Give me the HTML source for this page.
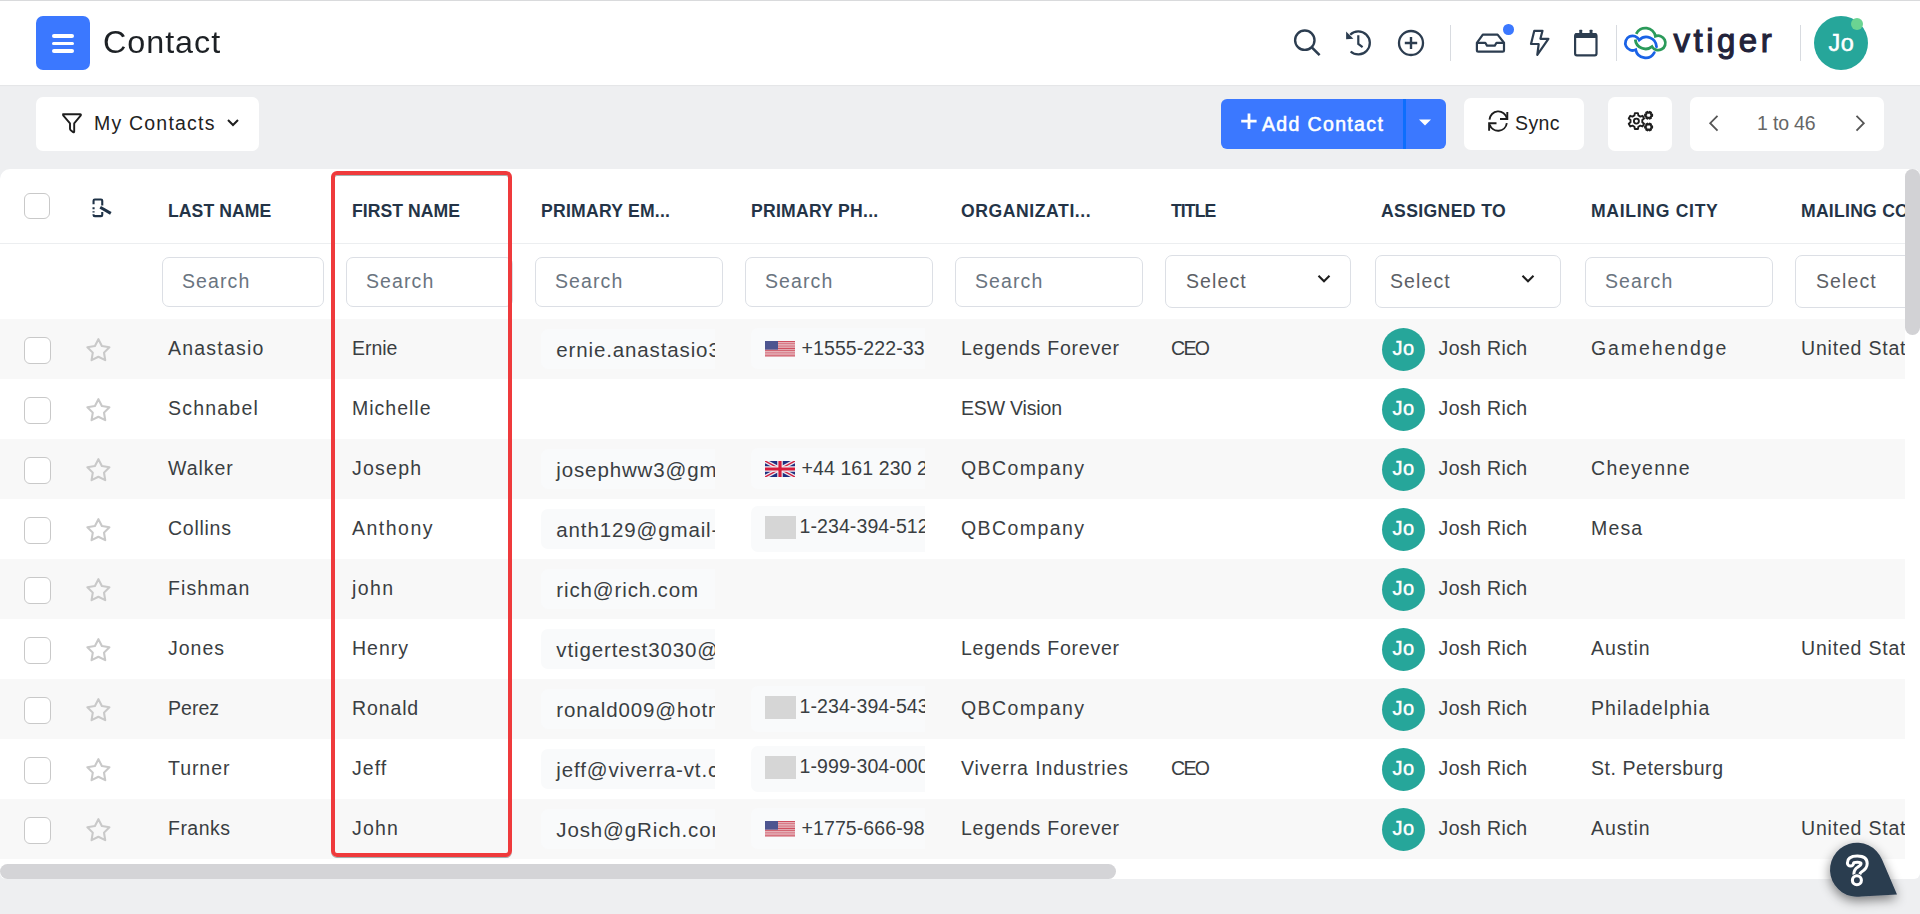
<!DOCTYPE html>
<html><head><meta charset="utf-8"><title>Contact</title><style>
*{box-sizing:border-box}
html,body{margin:0;padding:0}
body{width:1920px;height:914px;overflow:hidden;position:relative;background:#eeeff1;font-family:"Liberation Sans", sans-serif}
.t{position:absolute;white-space:nowrap}
.ic{position:absolute;display:block}
#hdr{position:absolute;left:0;top:0;width:1920px;height:85px;background:#fff;border-top:1px solid #d9dadc;box-shadow:0 1px 1px rgba(0,0,0,0.035)}
#ham{position:absolute;left:36px;top:16px;width:54px;height:54px;border-radius:7px;background:#3b78ff}
#ham i{position:absolute;left:16px;width:22px;height:3.6px;border-radius:2px;background:#fff}
.vsep{position:absolute;top:25px;width:1px;height:36px;background:#d8dbe0}
#av{position:absolute;left:1814px;top:16px;width:54px;height:54px;border-radius:50%;background:#26a69a}
#av span{position:absolute;left:0;width:54px;top:15.6px;text-align:center;color:#fff;font-size:23.5px;line-height:23.5px;letter-spacing:0.6px;-webkit-text-stroke:0.5px #fff;padding-left:1px}
#avdot{position:absolute;left:1851px;top:18px;width:12px;height:12px;border-radius:50%;background:#6bd492}
.btn{position:absolute;background:#fff;border-radius:7px}
#addbtn{position:absolute;left:1221px;top:99px;width:225px;height:50px;border-radius:6px;background:#3b78ff}
#adddiv{position:absolute;left:1403px;top:99px;width:3px;height:50px;background:#0d6efd}
#card{position:absolute;left:0;top:169px;width:1920px;height:710px;background:#fff;border-radius:10px 6px 6px 6px}
#clip{position:absolute;left:0;top:169px;width:1905px;height:690px;overflow:hidden;border-top-left-radius:10px}
.cb{position:absolute;background:#fff;border:1px solid #c9c9c9;border-radius:6px}
.inp{position:absolute;background:#fff;border:1px solid #dcdfe5;border-radius:7px}
.row{position:absolute;left:0;width:1905px;height:60px}
.ebox{position:absolute;background:#f9fafb;border-radius:7px 0 0 7px;overflow:hidden}
.av2{position:absolute;width:43px;height:43px;border-radius:50%;background:#26a69a}
.av2 span{position:absolute;left:0;width:43px;top:10.1px;text-align:center;color:#fff;font-size:20px;line-height:20px;letter-spacing:0.4px;-webkit-text-stroke:0.45px #fff}
#red{position:absolute;left:331px;top:2px;width:181px;height:686px;border:4px solid #ef3a3c;border-radius:6px;box-shadow:inset 0 1px 0 rgba(0,40,40,0.35), 0 1px 0 rgba(0,40,40,0.35)}
#hs{position:absolute;left:0;top:864px;width:1116px;height:15px;border-radius:8px;background:#d4d4d7}
#vs{position:absolute;left:1905px;top:169px;width:15px;height:166px;border-radius:8px;background:#d2d2d5}
</style></head>
<body>
<div id="hdr"></div>
<div id="ham"><i style="top:18px"></i><i style="top:25.5px"></i><i style="top:33px"></i></div>
<div class="t" style="left:103px;top:26.98px;font-size:30.5px;line-height:30.5px;color:#1d2125;font-weight:normal;letter-spacing:0.9px;transform:scaleX(1.06);transform-origin:0 0;">Contact</div>
<svg class="ic" style="left:1290px;top:26px" width="34" height="34" viewBox="0 0 34 34"><circle cx="14.8" cy="14.2" r="9.7" fill="none" stroke="#2c3d50" stroke-width="2.4"/><line x1="21.8" y1="21.3" x2="29.6" y2="29.2" stroke="#2c3d50" stroke-width="2.6" stroke-linecap="butt"/></svg>
<svg class="ic" style="left:1340px;top:26px" width="36" height="34" viewBox="0 0 36 34"><path d="M10.2 8.8 A11.5 11.5 0 1 1 10.65 25.5" fill="none" stroke="#2c3d50" stroke-width="2.3"/><path d="M6.1 5.6 L6.1 13.3 L13.4 12.8 Z" fill="#2c3d50"/><path d="M18.3 9.3 V17.9 L22.6 21.1" fill="none" stroke="#2c3d50" stroke-width="2.2"/></svg>
<svg class="ic" style="left:1394px;top:26px" width="34" height="34" viewBox="0 0 34 34"><circle cx="17" cy="17" r="12" fill="none" stroke="#2c3d50" stroke-width="2.3"/><path d="M17 11 V23 M10.8 17 H23.2" stroke="#2c3d50" stroke-width="2.4"/></svg>
<div class="vsep" style="left:1450px"></div>
<svg class="ic" style="left:1472px;top:26px" width="38" height="32" viewBox="0 0 38 32"><path d="M4.9 16.8 L10.8 8.6 H25.6 L32 16.8 V24.3 Q32 25.7 30.6 25.7 H6.3 Q4.9 25.7 4.9 24.3 Z" fill="none" stroke="#2c3d50" stroke-width="2.2" stroke-linejoin="round"/><path d="M4.9 16.8 H13.3 L15 19.6 H22.8 L24.5 16.8 H32" fill="none" stroke="#2c3d50" stroke-width="2.2" stroke-linejoin="round"/></svg>
<div style="position:absolute;left:1503px;top:24px;width:10.5px;height:10.5px;border-radius:50%;background:#3b78ff"></div>
<svg class="ic" style="left:1526px;top:26px" width="28" height="34" viewBox="0 0 28 34"><path d="M8.3 4.8 H16.5 L14.4 12.8 H22.4 L11.3 28.8 L12.7 18 H5 Z" fill="none" stroke="#2c3d50" stroke-width="2.2" stroke-linejoin="round"/></svg>
<svg class="ic" style="left:1570px;top:26px" width="32" height="34" viewBox="0 0 32 34"><rect x="5.1" y="8.2" width="21.4" height="21.1" rx="1.8" fill="none" stroke="#2c3d50" stroke-width="2.2"/><rect x="5.1" y="7.1" width="21.4" height="5" rx="1" fill="#2c3d50"/><rect x="9.3" y="3.7" width="2.9" height="4" rx="0.5" fill="#2c3d50"/><rect x="19.6" y="3.7" width="2.9" height="4" rx="0.5" fill="#2c3d50"/></svg>
<div class="vsep" style="left:1616px"></div>
<svg class="ic" style="left:1618px;top:20px" width="60" height="45" viewBox="0 0 60 45"><path d="M18.2 13.8 A10.2 10.2 0 0 1 37.4 16.3 A7.2 7.2 0 1 1 34 26.6 A10.3 10.3 0 0 1 17.3 19.5" fill="none" stroke="#2b9a5a" stroke-width="2.8"/><path d="M38.5 26.8 A10.2 10.2 0 0 0 21.2 19.9 A7.3 7.3 0 1 0 17.7 29.8 A10 10 0 0 0 36.3 32.6" fill="none" stroke="#1a62e6" stroke-width="2.8" stroke-linecap="round"/></svg>
<div class="t" style="left:1673.5px;top:23.57px;font-size:33px;line-height:33px;color:#22223a;font-weight:normal;letter-spacing:3.5px;-webkit-text-stroke:1.1px #22223a;">vtiger</div>
<div class="vsep" style="left:1800px"></div>
<div id="av"><span>Jo</span></div><div id="avdot"></div>
<div class="btn" style="left:36px;top:97px;width:223px;height:54px"></div>
<svg class="ic" style="left:58px;top:110px" width="28" height="26" viewBox="0 0 28 26"><path d="M5 4.2 H22 Q23.5 4.3 22.6 5.7 L16.2 13.3 V21.6 Q16.2 22.7 15.2 22.2 L12.8 20.3 Q12 19.6 12 18.7 V13.3 L5.4 5.7 Q4.5 4.3 6 4.2 Z" fill="none" stroke="#1e1e1e" stroke-width="1.9" stroke-linejoin="round"/></svg>
<div class="t" style="left:94px;top:113.79px;font-size:19.5px;line-height:19.5px;color:#222;font-weight:normal;letter-spacing:1.2050000000000012px;">My Contacts</div>
<svg class="ic" style="left:224px;top:114px" width="18" height="18" viewBox="0 0 18 18"><path d="M4 6 L9 11 L14 6" fill="none" stroke="#1e1e1e" stroke-width="2"/></svg>
<div id="addbtn"></div><div id="adddiv"></div>
<svg class="ic" style="left:1238px;top:110px" width="22" height="22" viewBox="0 0 22 22"><path d="M11 3.4 V19 M3.2 11.2 H18.6" stroke="#fff" stroke-width="2.8"/></svg>
<div class="t" style="left:1262px;top:114.79px;font-size:19.5px;line-height:19.5px;color:#fff;font-weight:normal;letter-spacing:1.35px;-webkit-text-stroke:0.55px #fff;">Add Contact</div>
<svg class="ic" style="left:1417px;top:117px" width="16" height="10" viewBox="0 0 16 10"><path d="M2 2.5 H14 L8 8.5 Z" fill="#fff"/></svg>
<div class="btn" style="left:1464px;top:98px;width:120px;height:52px"></div>
<svg class="ic" style="left:1484px;top:108px" width="28" height="28" viewBox="0 0 28 28"><path d="M5.5 11.6 A8.8 8.8 0 0 1 22.9 10.4" fill="none" stroke="#1e1e1e" stroke-width="1.9"/><path d="M22.8 15.1 A8.8 8.8 0 0 1 5.7 16.6" fill="none" stroke="#1e1e1e" stroke-width="1.9"/><path d="M23.3 4 V11 H16" fill="none" stroke="#1e1e1e" stroke-width="1.9"/><path d="M5.1 22.7 V15.3 H12.5" fill="none" stroke="#1e1e1e" stroke-width="1.9"/></svg>
<div class="t" style="left:1515px;top:113.79px;font-size:19.5px;line-height:19.5px;color:#222;font-weight:normal;letter-spacing:0.4166666666666667px;">Sync</div>
<div class="btn" style="left:1608px;top:97px;width:64px;height:54px"></div>
<svg class="ic" style="left:1624px;top:108px" width="34" height="28" viewBox="0 0 34 28"><path d="M10.45 7.43 L10.85 5.15 L13.95 5.15 L14.35 7.43 L16.34 8.57 L18.51 7.79 L20.06 10.46 L18.29 11.96 L18.29 14.24 L20.06 15.74 L18.51 18.41 L16.34 17.63 L14.35 18.77 L13.95 21.05 L10.85 21.05 L10.45 18.77 L8.46 17.63 L6.29 18.41 L4.74 15.74 L6.51 14.24 L6.51 11.96 L4.74 10.46 L6.29 7.79 L8.46 8.57 Z" fill="none" stroke="#1e1e1e" stroke-width="1.9" stroke-linejoin="round"/><circle cx="12.4" cy="13.1" r="2.5" fill="none" stroke="#1e1e1e" stroke-width="1.9"/><path d="M26.95 6.34 L28.21 6.37 L28.21 8.03 L26.95 8.06 L26.52 8.81 L27.12 9.91 L25.68 10.74 L25.03 9.66 L24.17 9.66 L23.52 10.74 L22.08 9.91 L22.68 8.81 L22.25 8.06 L20.99 8.03 L20.99 6.37 L22.25 6.34 L22.68 5.59 L22.08 4.49 L23.52 3.66 L24.17 4.74 L25.03 4.74 L25.68 3.66 L27.12 4.49 L26.52 5.59 Z" fill="none" stroke="#1e1e1e" stroke-width="1.8" stroke-linejoin="round"/><path d="M26.95 18.14 L28.21 18.17 L28.21 19.83 L26.95 19.86 L26.52 20.61 L27.12 21.71 L25.68 22.54 L25.03 21.46 L24.17 21.46 L23.52 22.54 L22.08 21.71 L22.68 20.61 L22.25 19.86 L20.99 19.83 L20.99 18.17 L22.25 18.14 L22.68 17.39 L22.08 16.29 L23.52 15.46 L24.17 16.54 L25.03 16.54 L25.68 15.46 L27.12 16.29 L26.52 17.39 Z" fill="none" stroke="#1e1e1e" stroke-width="1.8" stroke-linejoin="round"/></svg>
<div class="btn" style="left:1690px;top:97px;width:194px;height:54px"></div>
<svg class="ic" style="left:1704px;top:113px" width="20" height="20" viewBox="0 0 20 20"><path d="M13.5 2.8 L6.2 10.2 L13.5 17.6" fill="none" stroke="#555" stroke-width="1.8"/></svg>
<div class="t" style="left:1757px;top:113.79px;font-size:19.5px;line-height:19.5px;color:#666;font-weight:normal;letter-spacing:-0.17499999999999952px;">1 to 46</div>
<svg class="ic" style="left:1850px;top:113px" width="20" height="20" viewBox="0 0 20 20"><path d="M6.5 2.8 L13.8 10.2 L6.5 17.6" fill="none" stroke="#555" stroke-width="1.8"/></svg>
<div id="card"></div>
<div id="clip">
<div style="position:absolute;left:0;top:74px;width:1905px;height:1px;background:#eceef0"></div>
<div class="cb" style="left:24px;top:24px;width:26px;height:26px"></div>
<svg class="ic" style="left:88px;top:26px" width="26" height="24" viewBox="0 0 26 24"><path d="M5.55 9.3 V5.8 Q5.55 4.55 6.8 4.55 H13 Q14.25 4.55 14.25 5.8 V10.6" fill="none" stroke="#1f3247" stroke-width="2.1"/><path d="M14.25 17 V19.9 Q14.25 21.15 13 21.15 H6.8 Q5.55 21.15 5.55 19.9 V19.2" fill="none" stroke="#1f3247" stroke-width="2.1"/><path d="M5.55 12.2 V14.2 M5.55 16.2 V17.6" stroke="#1f3247" stroke-width="2.1"/><path d="M12.2 12.3 L22.8 18.4" stroke="#1f3247" stroke-width="3"/></svg>
<div class="t" style="left:168px;top:34.10px;font-size:17.6px;line-height:17.6px;color:#243447;font-weight:bold;letter-spacing:0.08124999999999893px;">LAST NAME</div>
<div class="t" style="left:352px;top:34.10px;font-size:17.6px;line-height:17.6px;color:#243447;font-weight:bold;letter-spacing:0.050000000000000315px;">FIRST NAME</div>
<div class="t" style="left:541px;top:34.10px;font-size:17.6px;line-height:17.6px;color:#243447;font-weight:bold;letter-spacing:0.23749999999999952px;">PRIMARY EM...</div>
<div class="t" style="left:751px;top:34.10px;font-size:17.6px;line-height:17.6px;color:#243447;font-weight:bold;letter-spacing:0.25833333333333286px;">PRIMARY PH...</div>
<div class="t" style="left:961px;top:34.10px;font-size:17.6px;line-height:17.6px;color:#243447;font-weight:bold;letter-spacing:0.5708333333333329px;">ORGANIZATI...</div>
<div class="t" style="left:1171px;top:34.10px;font-size:17.6px;line-height:17.6px;color:#243447;font-weight:bold;letter-spacing:-0.9000000000000004px;">TITLE</div>
<div class="t" style="left:1381px;top:34.10px;font-size:17.6px;line-height:17.6px;color:#243447;font-weight:bold;letter-spacing:0.375px;">ASSIGNED TO</div>
<div class="t" style="left:1591px;top:34.10px;font-size:17.6px;line-height:17.6px;color:#243447;font-weight:bold;letter-spacing:0.6909090909090917px;">MAILING CITY</div>
<div class="t" style="left:1801px;top:34.10px;font-size:17.6px;line-height:17.6px;color:#243447;font-weight:bold;letter-spacing:0.25px;">MAILING COUNTRY</div>
<div class="inp" style="left:162px;top:88px;width:162px;height:50px"></div><div class="t" style="left:182px;top:102.99px;font-size:19.5px;line-height:19.5px;color:#6a7480;font-weight:normal;letter-spacing:1.1px;">Search</div>
<div class="inp" style="left:346px;top:88px;width:167px;height:50px"></div><div class="t" style="left:366px;top:102.99px;font-size:19.5px;line-height:19.5px;color:#6a7480;font-weight:normal;letter-spacing:1.1px;">Search</div>
<div class="inp" style="left:535px;top:88px;width:188px;height:50px"></div><div class="t" style="left:555px;top:102.99px;font-size:19.5px;line-height:19.5px;color:#6a7480;font-weight:normal;letter-spacing:1.1px;">Search</div>
<div class="inp" style="left:745px;top:88px;width:188px;height:50px"></div><div class="t" style="left:765px;top:102.99px;font-size:19.5px;line-height:19.5px;color:#6a7480;font-weight:normal;letter-spacing:1.1px;">Search</div>
<div class="inp" style="left:955px;top:88px;width:188px;height:50px"></div><div class="t" style="left:975px;top:102.99px;font-size:19.5px;line-height:19.5px;color:#6a7480;font-weight:normal;letter-spacing:1.1px;">Search</div>
<div class="inp" style="left:1165px;top:86px;width:186px;height:53px"></div><div class="t" style="left:1186px;top:102.99px;font-size:19.5px;line-height:19.5px;color:#5c6066;font-weight:normal;letter-spacing:1.1px;">Select</div><svg class="ic" style="left:1315px;top:102px" width="18" height="16" viewBox="0 0 18 16"><path d="M3.5 4.8 L9 10.3 L14.5 4.8" fill="none" stroke="#1e1e1e" stroke-width="2.1"/></svg>
<div class="inp" style="left:1375px;top:86px;width:186px;height:53px"></div><div class="t" style="left:1390px;top:102.99px;font-size:19.5px;line-height:19.5px;color:#5c6066;font-weight:normal;letter-spacing:1.1px;">Select</div><svg class="ic" style="left:1519px;top:102px" width="18" height="16" viewBox="0 0 18 16"><path d="M3.5 4.8 L9 10.3 L14.5 4.8" fill="none" stroke="#1e1e1e" stroke-width="2.1"/></svg>
<div class="inp" style="left:1585px;top:88px;width:188px;height:50px"></div><div class="t" style="left:1605px;top:102.99px;font-size:19.5px;line-height:19.5px;color:#6a7480;font-weight:normal;letter-spacing:1.1px;">Search</div>
<div class="inp" style="left:1795px;top:86px;width:188px;height:53px"></div><div class="t" style="left:1816px;top:102.99px;font-size:19.5px;line-height:19.5px;color:#5c6066;font-weight:normal;letter-spacing:1.1px;">Select</div><svg class="ic" style="left:1945px;top:102px" width="18" height="16" viewBox="0 0 18 16"><path d="M3.5 4.8 L9 10.3 L14.5 4.8" fill="none" stroke="#1e1e1e" stroke-width="2.1"/></svg>
<div class="row" style="top:150px;background:#f8f8f8"></div>
<div class="cb" style="left:24px;top:168px;width:27px;height:26.7px"></div>
<svg class="ic" style="left:84px;top:166px" width="30" height="30" viewBox="0 0 30 30"><path d="M14.40 4.20 L17.87 11.03 L25.43 12.22 L20.01 17.62 L21.22 25.18 L14.40 21.70 L7.58 25.18 L8.79 17.62 L3.37 12.22 L10.93 11.03 Z" fill="none" stroke="#c9c9c9" stroke-width="2.1" stroke-linejoin="round"/></svg>
<div class="t" style="left:168px;top:170.49px;font-size:19.5px;line-height:19.5px;color:#3a3e42;font-weight:normal;letter-spacing:1.206249999999999px;">Anastasio</div>
<div class="t" style="left:352px;top:170.49px;font-size:19.5px;line-height:19.5px;color:#3a3e42;font-weight:normal;letter-spacing:-0.05000000000000071px;">Ernie</div>
<div class="ebox" style="left:541px;top:160px;width:174px;height:40px"><div class="t" style="left:15.3px;top:10.65px;font-size:20.5px;line-height:20.5px;color:#3a3e42;font-weight:normal;letter-spacing:0.87px;">ernie.anastasio3</div></div>
<div class="ebox" style="left:751px;top:159px;width:174px;height:41px"><div style="position:absolute;left:14px;top:13px;width:30px;height:16px"><svg width="30" height="16" viewBox="0 0 30 16" style="position:absolute;left:0;top:0"><rect x="0" y="0.00" width="30" height="1.14" fill="#cf5060"/><rect x="0" y="1.14" width="30" height="1.14" fill="#e2a8b0"/><rect x="0" y="2.29" width="30" height="1.14" fill="#cf5060"/><rect x="0" y="3.43" width="30" height="1.14" fill="#e2a8b0"/><rect x="0" y="4.57" width="30" height="1.14" fill="#cf5060"/><rect x="0" y="5.71" width="30" height="1.14" fill="#e2a8b0"/><rect x="0" y="6.86" width="30" height="1.14" fill="#cf5060"/><rect x="0" y="8.00" width="30" height="1.14" fill="#e2a8b0"/><rect x="0" y="9.14" width="30" height="1.14" fill="#cf5060"/><rect x="0" y="10.29" width="30" height="1.14" fill="#e2a8b0"/><rect x="0" y="11.43" width="30" height="1.14" fill="#cf5060"/><rect x="0" y="12.57" width="30" height="1.14" fill="#e2a8b0"/><rect x="0" y="13.71" width="30" height="1.14" fill="#cf5060"/><rect x="0" y="14.86" width="30" height="1.14" fill="#e2a8b0"/><rect x="0" y="0" width="13" height="8.6" fill="#4d5590"/></svg></div><div class="t" style="left:50.5px;top:11.19px;font-size:19.5px;line-height:19.5px;color:#3a3e42;font-weight:normal;letter-spacing:0.1px;">+1555-222-3333</div></div>
<div class="t" style="left:961px;top:170.49px;font-size:19.5px;line-height:19.5px;color:#3a3e42;font-weight:normal;letter-spacing:0.7535714285714293px;">Legends Forever</div>
<div class="t" style="left:1171px;top:170.49px;font-size:19.5px;line-height:19.5px;color:#3a3e42;font-weight:normal;letter-spacing:-1.625px;">CEO</div>
<div class="av2" style="left:1382px;top:159px"><span>Jo</span></div>
<div class="t" style="left:1438.5px;top:170.49px;font-size:19.5px;line-height:19.5px;color:#3a3e42;font-weight:normal;letter-spacing:0.375px;">Josh Rich</div>
<div class="t" style="left:1591px;top:170.49px;font-size:19.5px;line-height:19.5px;color:#3a3e42;font-weight:normal;letter-spacing:1.9166666666666667px;">Gamehendge</div>
<div class="t" style="left:1801px;top:170.49px;font-size:19.5px;line-height:19.5px;color:#3a3e42;font-weight:normal;letter-spacing:0.8px;">United States</div>
<div class="row" style="top:210px;background:#ffffff"></div>
<div class="cb" style="left:24px;top:228px;width:27px;height:26.7px"></div>
<svg class="ic" style="left:84px;top:226px" width="30" height="30" viewBox="0 0 30 30"><path d="M14.40 4.20 L17.87 11.03 L25.43 12.22 L20.01 17.62 L21.22 25.18 L14.40 21.70 L7.58 25.18 L8.79 17.62 L3.37 12.22 L10.93 11.03 Z" fill="none" stroke="#c9c9c9" stroke-width="2.1" stroke-linejoin="round"/></svg>
<div class="t" style="left:168px;top:230.49px;font-size:19.5px;line-height:19.5px;color:#3a3e42;font-weight:normal;letter-spacing:1.2142857142857142px;">Schnabel</div>
<div class="t" style="left:352px;top:230.49px;font-size:19.5px;line-height:19.5px;color:#3a3e42;font-weight:normal;letter-spacing:0.9928571428571432px;">Michelle</div>
<div class="t" style="left:961px;top:230.49px;font-size:19.5px;line-height:19.5px;color:#3a3e42;font-weight:normal;letter-spacing:-0.17777777777777715px;">ESW Vision</div>
<div class="av2" style="left:1382px;top:219px"><span>Jo</span></div>
<div class="t" style="left:1438.5px;top:230.49px;font-size:19.5px;line-height:19.5px;color:#3a3e42;font-weight:normal;letter-spacing:0.375px;">Josh Rich</div>
<div class="row" style="top:270px;background:#f8f8f8"></div>
<div class="cb" style="left:24px;top:288px;width:27px;height:26.7px"></div>
<svg class="ic" style="left:84px;top:286px" width="30" height="30" viewBox="0 0 30 30"><path d="M14.40 4.20 L17.87 11.03 L25.43 12.22 L20.01 17.62 L21.22 25.18 L14.40 21.70 L7.58 25.18 L8.79 17.62 L3.37 12.22 L10.93 11.03 Z" fill="none" stroke="#c9c9c9" stroke-width="2.1" stroke-linejoin="round"/></svg>
<div class="t" style="left:168px;top:290.49px;font-size:19.5px;line-height:19.5px;color:#3a3e42;font-weight:normal;letter-spacing:0.95px;">Walker</div>
<div class="t" style="left:352px;top:290.49px;font-size:19.5px;line-height:19.5px;color:#3a3e42;font-weight:normal;letter-spacing:1.260000000000001px;">Joseph</div>
<div class="ebox" style="left:541px;top:280px;width:174px;height:40px"><div class="t" style="left:15.3px;top:10.65px;font-size:20.5px;line-height:20.5px;color:#3a3e42;font-weight:normal;letter-spacing:0.87px;">josephww3@gmail.com</div></div>
<div class="ebox" style="left:751px;top:279px;width:174px;height:41px"><div style="position:absolute;left:14px;top:13px;width:30px;height:16px"><svg width="30" height="16" viewBox="0 0 30 16" style="position:absolute;left:0;top:0"><rect width="30" height="16" fill="#1f2f80"/><path d="M0 0 L30 16 M30 0 L0 16" stroke="#e8e8f0" stroke-width="4"/><path d="M0 0 L30 16 M30 0 L0 16" stroke="#d22040" stroke-width="1.4"/><path d="M15 0 V16 M0 8 H30" stroke="#f0f0f4" stroke-width="5.5"/><path d="M15 0 V16 M0 8 H30" stroke="#d61c3c" stroke-width="3.2"/></svg></div><div class="t" style="left:50.5px;top:11.19px;font-size:19.5px;line-height:19.5px;color:#3a3e42;font-weight:normal;letter-spacing:0.1px;">+44 161 230 2000</div></div>
<div class="t" style="left:961px;top:290.49px;font-size:19.5px;line-height:19.5px;color:#3a3e42;font-weight:normal;letter-spacing:1.4187499999999993px;">QBCompany</div>
<div class="av2" style="left:1382px;top:279px"><span>Jo</span></div>
<div class="t" style="left:1438.5px;top:290.49px;font-size:19.5px;line-height:19.5px;color:#3a3e42;font-weight:normal;letter-spacing:0.375px;">Josh Rich</div>
<div class="t" style="left:1591px;top:290.49px;font-size:19.5px;line-height:19.5px;color:#3a3e42;font-weight:normal;letter-spacing:1.3999999999999997px;">Cheyenne</div>
<div class="row" style="top:330px;background:#ffffff"></div>
<div class="cb" style="left:24px;top:348px;width:27px;height:26.7px"></div>
<svg class="ic" style="left:84px;top:346px" width="30" height="30" viewBox="0 0 30 30"><path d="M14.40 4.20 L17.87 11.03 L25.43 12.22 L20.01 17.62 L21.22 25.18 L14.40 21.70 L7.58 25.18 L8.79 17.62 L3.37 12.22 L10.93 11.03 Z" fill="none" stroke="#c9c9c9" stroke-width="2.1" stroke-linejoin="round"/></svg>
<div class="t" style="left:168px;top:350.49px;font-size:19.5px;line-height:19.5px;color:#3a3e42;font-weight:normal;letter-spacing:0.7333333333333331px;">Collins</div>
<div class="t" style="left:352px;top:350.49px;font-size:19.5px;line-height:19.5px;color:#3a3e42;font-weight:normal;letter-spacing:1.4916666666666671px;">Anthony</div>
<div class="ebox" style="left:541px;top:340px;width:174px;height:40px"><div class="t" style="left:15.3px;top:10.65px;font-size:20.5px;line-height:20.5px;color:#3a3e42;font-weight:normal;letter-spacing:0.87px;">anth129@gmail-</div></div>
<div class="ebox" style="left:751px;top:337px;width:174px;height:46px"><div style="position:absolute;left:14px;top:10px;width:31px;height:23px;background:#d6d6d6"></div><div class="t" style="left:48.5px;top:11.09px;font-size:19.5px;line-height:19.5px;color:#3a3e42;font-weight:normal;letter-spacing:0.1px;">1-234-394-5123</div></div>
<div class="t" style="left:961px;top:350.49px;font-size:19.5px;line-height:19.5px;color:#3a3e42;font-weight:normal;letter-spacing:1.4187499999999993px;">QBCompany</div>
<div class="av2" style="left:1382px;top:339px"><span>Jo</span></div>
<div class="t" style="left:1438.5px;top:350.49px;font-size:19.5px;line-height:19.5px;color:#3a3e42;font-weight:normal;letter-spacing:0.375px;">Josh Rich</div>
<div class="t" style="left:1591px;top:350.49px;font-size:19.5px;line-height:19.5px;color:#3a3e42;font-weight:normal;letter-spacing:1.1666666666666667px;">Mesa</div>
<div class="row" style="top:390px;background:#f8f8f8"></div>
<div class="cb" style="left:24px;top:408px;width:27px;height:26.7px"></div>
<svg class="ic" style="left:84px;top:406px" width="30" height="30" viewBox="0 0 30 30"><path d="M14.40 4.20 L17.87 11.03 L25.43 12.22 L20.01 17.62 L21.22 25.18 L14.40 21.70 L7.58 25.18 L8.79 17.62 L3.37 12.22 L10.93 11.03 Z" fill="none" stroke="#c9c9c9" stroke-width="2.1" stroke-linejoin="round"/></svg>
<div class="t" style="left:168px;top:410.49px;font-size:19.5px;line-height:19.5px;color:#3a3e42;font-weight:normal;letter-spacing:1.0916666666666661px;">Fishman</div>
<div class="t" style="left:352px;top:410.49px;font-size:19.5px;line-height:19.5px;color:#3a3e42;font-weight:normal;letter-spacing:1.3833333333333329px;">john</div>
<div class="ebox" style="left:541px;top:400px;width:174px;height:40px"><div class="t" style="left:15.3px;top:10.65px;font-size:20.5px;line-height:20.5px;color:#3a3e42;font-weight:normal;letter-spacing:0.875px;">rich@rich.com</div></div>
<div class="av2" style="left:1382px;top:399px"><span>Jo</span></div>
<div class="t" style="left:1438.5px;top:410.49px;font-size:19.5px;line-height:19.5px;color:#3a3e42;font-weight:normal;letter-spacing:0.375px;">Josh Rich</div>
<div class="row" style="top:450px;background:#ffffff"></div>
<div class="cb" style="left:24px;top:468px;width:27px;height:26.7px"></div>
<svg class="ic" style="left:84px;top:466px" width="30" height="30" viewBox="0 0 30 30"><path d="M14.40 4.20 L17.87 11.03 L25.43 12.22 L20.01 17.62 L21.22 25.18 L14.40 21.70 L7.58 25.18 L8.79 17.62 L3.37 12.22 L10.93 11.03 Z" fill="none" stroke="#c9c9c9" stroke-width="2.1" stroke-linejoin="round"/></svg>
<div class="t" style="left:168px;top:470.49px;font-size:19.5px;line-height:19.5px;color:#3a3e42;font-weight:normal;letter-spacing:0.9875000000000007px;">Jones</div>
<div class="t" style="left:352px;top:470.49px;font-size:19.5px;line-height:19.5px;color:#3a3e42;font-weight:normal;letter-spacing:0.9749999999999996px;">Henry</div>
<div class="ebox" style="left:541px;top:460px;width:174px;height:40px"><div class="t" style="left:15.3px;top:10.65px;font-size:20.5px;line-height:20.5px;color:#3a3e42;font-weight:normal;letter-spacing:0.87px;">vtigertest3030@gmail.com</div></div>
<div class="t" style="left:961px;top:470.49px;font-size:19.5px;line-height:19.5px;color:#3a3e42;font-weight:normal;letter-spacing:0.7535714285714293px;">Legends Forever</div>
<div class="av2" style="left:1382px;top:459px"><span>Jo</span></div>
<div class="t" style="left:1438.5px;top:470.49px;font-size:19.5px;line-height:19.5px;color:#3a3e42;font-weight:normal;letter-spacing:0.375px;">Josh Rich</div>
<div class="t" style="left:1591px;top:470.49px;font-size:19.5px;line-height:19.5px;color:#3a3e42;font-weight:normal;letter-spacing:0.9px;">Austin</div>
<div class="t" style="left:1801px;top:470.49px;font-size:19.5px;line-height:19.5px;color:#3a3e42;font-weight:normal;letter-spacing:0.8px;">United States</div>
<div class="row" style="top:510px;background:#f8f8f8"></div>
<div class="cb" style="left:24px;top:528px;width:27px;height:26.7px"></div>
<svg class="ic" style="left:84px;top:526px" width="30" height="30" viewBox="0 0 30 30"><path d="M14.40 4.20 L17.87 11.03 L25.43 12.22 L20.01 17.62 L21.22 25.18 L14.40 21.70 L7.58 25.18 L8.79 17.62 L3.37 12.22 L10.93 11.03 Z" fill="none" stroke="#c9c9c9" stroke-width="2.1" stroke-linejoin="round"/></svg>
<div class="t" style="left:168px;top:530.49px;font-size:19.5px;line-height:19.5px;color:#3a3e42;font-weight:normal;letter-spacing:0.01249999999999929px;">Perez</div>
<div class="t" style="left:352px;top:530.49px;font-size:19.5px;line-height:19.5px;color:#3a3e42;font-weight:normal;letter-spacing:0.8800000000000011px;">Ronald</div>
<div class="ebox" style="left:541px;top:520px;width:174px;height:40px"><div class="t" style="left:15.3px;top:10.65px;font-size:20.5px;line-height:20.5px;color:#3a3e42;font-weight:normal;letter-spacing:0.87px;">ronald009@hotmail.com</div></div>
<div class="ebox" style="left:751px;top:517px;width:174px;height:46px"><div style="position:absolute;left:14px;top:10px;width:31px;height:23px;background:#d6d6d6"></div><div class="t" style="left:48.5px;top:11.09px;font-size:19.5px;line-height:19.5px;color:#3a3e42;font-weight:normal;letter-spacing:0.1px;">1-234-394-5432</div></div>
<div class="t" style="left:961px;top:530.49px;font-size:19.5px;line-height:19.5px;color:#3a3e42;font-weight:normal;letter-spacing:1.4187499999999993px;">QBCompany</div>
<div class="av2" style="left:1382px;top:519px"><span>Jo</span></div>
<div class="t" style="left:1438.5px;top:530.49px;font-size:19.5px;line-height:19.5px;color:#3a3e42;font-weight:normal;letter-spacing:0.375px;">Josh Rich</div>
<div class="t" style="left:1591px;top:530.49px;font-size:19.5px;line-height:19.5px;color:#3a3e42;font-weight:normal;letter-spacing:1.1045454545454552px;">Philadelphia</div>
<div class="row" style="top:570px;background:#ffffff"></div>
<div class="cb" style="left:24px;top:588px;width:27px;height:26.7px"></div>
<svg class="ic" style="left:84px;top:586px" width="30" height="30" viewBox="0 0 30 30"><path d="M14.40 4.20 L17.87 11.03 L25.43 12.22 L20.01 17.62 L21.22 25.18 L14.40 21.70 L7.58 25.18 L8.79 17.62 L3.37 12.22 L10.93 11.03 Z" fill="none" stroke="#c9c9c9" stroke-width="2.1" stroke-linejoin="round"/></svg>
<div class="t" style="left:168px;top:590.49px;font-size:19.5px;line-height:19.5px;color:#3a3e42;font-weight:normal;letter-spacing:0.9399999999999992px;">Turner</div>
<div class="t" style="left:352px;top:590.49px;font-size:19.5px;line-height:19.5px;color:#3a3e42;font-weight:normal;letter-spacing:1.0333333333333339px;">Jeff</div>
<div class="ebox" style="left:541px;top:580px;width:174px;height:40px"><div class="t" style="left:15.3px;top:10.65px;font-size:20.5px;line-height:20.5px;color:#3a3e42;font-weight:normal;letter-spacing:0.87px;">jeff@viverra-vt.com</div></div>
<div class="ebox" style="left:751px;top:577px;width:174px;height:46px"><div style="position:absolute;left:14px;top:10px;width:31px;height:23px;background:#d6d6d6"></div><div class="t" style="left:48.5px;top:11.09px;font-size:19.5px;line-height:19.5px;color:#3a3e42;font-weight:normal;letter-spacing:0.1px;">1-999-304-0000</div></div>
<div class="t" style="left:961px;top:590.49px;font-size:19.5px;line-height:19.5px;color:#3a3e42;font-weight:normal;letter-spacing:0.917647058823529px;">Viverra Industries</div>
<div class="t" style="left:1171px;top:590.49px;font-size:19.5px;line-height:19.5px;color:#3a3e42;font-weight:normal;letter-spacing:-1.625px;">CEO</div>
<div class="av2" style="left:1382px;top:579px"><span>Jo</span></div>
<div class="t" style="left:1438.5px;top:590.49px;font-size:19.5px;line-height:19.5px;color:#3a3e42;font-weight:normal;letter-spacing:0.375px;">Josh Rich</div>
<div class="t" style="left:1591px;top:590.49px;font-size:19.5px;line-height:19.5px;color:#3a3e42;font-weight:normal;letter-spacing:0.5653846153846149px;">St. Petersburg</div>
<div class="row" style="top:630px;background:#f8f8f8"></div>
<div class="cb" style="left:24px;top:648px;width:27px;height:26.7px"></div>
<svg class="ic" style="left:84px;top:646px" width="30" height="30" viewBox="0 0 30 30"><path d="M14.40 4.20 L17.87 11.03 L25.43 12.22 L20.01 17.62 L21.22 25.18 L14.40 21.70 L7.58 25.18 L8.79 17.62 L3.37 12.22 L10.93 11.03 Z" fill="none" stroke="#c9c9c9" stroke-width="2.1" stroke-linejoin="round"/></svg>
<div class="t" style="left:168px;top:650.49px;font-size:19.5px;line-height:19.5px;color:#3a3e42;font-weight:normal;letter-spacing:0.4799999999999997px;">Franks</div>
<div class="t" style="left:352px;top:650.49px;font-size:19.5px;line-height:19.5px;color:#3a3e42;font-weight:normal;letter-spacing:1.1666666666666667px;">John</div>
<div class="ebox" style="left:541px;top:640px;width:174px;height:40px"><div class="t" style="left:15.3px;top:10.65px;font-size:20.5px;line-height:20.5px;color:#3a3e42;font-weight:normal;letter-spacing:0.87px;">Josh@gRich.com</div></div>
<div class="ebox" style="left:751px;top:639px;width:174px;height:41px"><div style="position:absolute;left:14px;top:13px;width:30px;height:16px"><svg width="30" height="16" viewBox="0 0 30 16" style="position:absolute;left:0;top:0"><rect x="0" y="0.00" width="30" height="1.14" fill="#cf5060"/><rect x="0" y="1.14" width="30" height="1.14" fill="#e2a8b0"/><rect x="0" y="2.29" width="30" height="1.14" fill="#cf5060"/><rect x="0" y="3.43" width="30" height="1.14" fill="#e2a8b0"/><rect x="0" y="4.57" width="30" height="1.14" fill="#cf5060"/><rect x="0" y="5.71" width="30" height="1.14" fill="#e2a8b0"/><rect x="0" y="6.86" width="30" height="1.14" fill="#cf5060"/><rect x="0" y="8.00" width="30" height="1.14" fill="#e2a8b0"/><rect x="0" y="9.14" width="30" height="1.14" fill="#cf5060"/><rect x="0" y="10.29" width="30" height="1.14" fill="#e2a8b0"/><rect x="0" y="11.43" width="30" height="1.14" fill="#cf5060"/><rect x="0" y="12.57" width="30" height="1.14" fill="#e2a8b0"/><rect x="0" y="13.71" width="30" height="1.14" fill="#cf5060"/><rect x="0" y="14.86" width="30" height="1.14" fill="#e2a8b0"/><rect x="0" y="0" width="13" height="8.6" fill="#4d5590"/></svg></div><div class="t" style="left:50.5px;top:11.19px;font-size:19.5px;line-height:19.5px;color:#3a3e42;font-weight:normal;letter-spacing:0.1px;">+1775-666-9898</div></div>
<div class="t" style="left:961px;top:650.49px;font-size:19.5px;line-height:19.5px;color:#3a3e42;font-weight:normal;letter-spacing:0.7535714285714293px;">Legends Forever</div>
<div class="av2" style="left:1382px;top:639px"><span>Jo</span></div>
<div class="t" style="left:1438.5px;top:650.49px;font-size:19.5px;line-height:19.5px;color:#3a3e42;font-weight:normal;letter-spacing:0.375px;">Josh Rich</div>
<div class="t" style="left:1591px;top:650.49px;font-size:19.5px;line-height:19.5px;color:#3a3e42;font-weight:normal;letter-spacing:0.9px;">Austin</div>
<div class="t" style="left:1801px;top:650.49px;font-size:19.5px;line-height:19.5px;color:#3a3e42;font-weight:normal;letter-spacing:0.8px;">United States</div>
<div id="red"></div>
</div>
<div id="hs"></div><div id="vs"></div>
<svg id="help" style="position:absolute;left:1815px;top:830px;overflow:visible" width="100" height="80" viewBox="0 0 100 80"><defs><filter id="sh" x="-60%" y="-60%" width="220%" height="220%"><feGaussianBlur in="SourceAlpha" stdDeviation="6"/><feOffset dx="0" dy="4"/><feComponentTransfer><feFuncA type="linear" slope="0.5"/></feComponentTransfer><feMerge><feMergeNode/><feMergeNode in="SourceGraphic"/></feMerge></filter></defs><path filter="url(#sh)" d="M67.03 29.6 L82 64.4 L46.2 66.4 A27 27 0 1 1 67.03 29.6 Z" fill="#2c3d50"/><path d="M35.5 33 Q35.5 29.1 42.3 29.1 Q49.1 29.1 49.1 33.5 Q49.1 37 44.6 39.6 Q42 41.2 42 43.6" fill="none" stroke="#fff" stroke-width="9.2" stroke-linecap="round" stroke-linejoin="round"/><path d="M35.5 33 Q35.5 29.1 42.3 29.1 Q49.1 29.1 49.1 33.5 Q49.1 37 44.6 39.6 Q42 41.2 42 43.6" fill="none" stroke="#2c3d50" stroke-width="3.2" stroke-linecap="round" stroke-linejoin="round"/><circle cx="41.9" cy="50.2" r="6.6" fill="#2c3d50"/><circle cx="41.9" cy="50.2" r="4.5" fill="none" stroke="#fff" stroke-width="3.1"/></svg>
</body></html>
